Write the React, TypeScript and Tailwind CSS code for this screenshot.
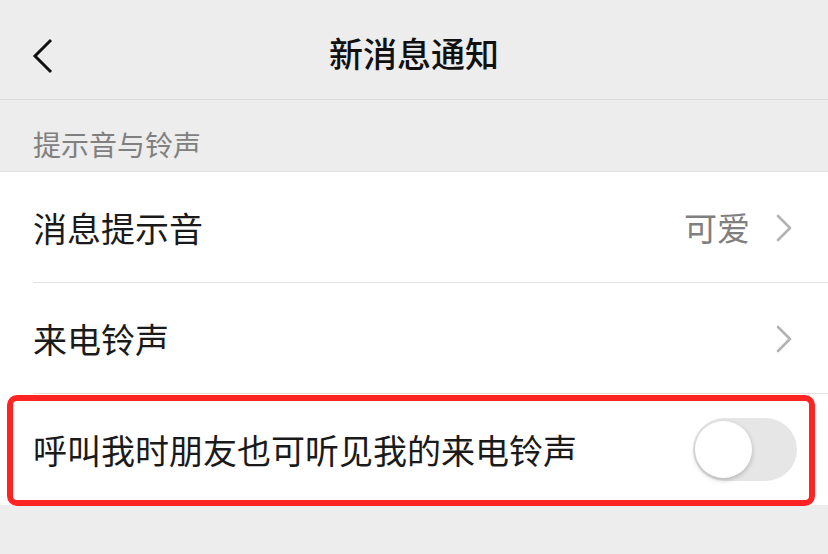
import { ReactNode } from "react";

const font = {
  fontFamily: '"Noto Sans CJK SC", "Noto Sans", sans-serif',
};

function Chevron() {
  return (
    <svg width="16" height="28" viewBox="0 0 16 28" fill="none">
      <path
        d="M2 2 L14 14 L2 26"
        stroke="#b3b3b3"
        strokeWidth="2.6"
        strokeLinecap="round"
        strokeLinejoin="round"
      />
    </svg>
  );
}

function Row({
  label,
  right,
  divider = true,
}: {
  label: string;
  right?: ReactNode;
  divider?: boolean;
}) {
  return (
    <div className="relative flex h-[111px] items-center justify-between pl-[33px] pr-[36px]">
      <span className="text-[34px] leading-none text-[#1a1a1a]">{label}</span>
      {right}
      {divider && (
        <div className="absolute bottom-0 left-[33px] right-0 h-px bg-[#e3e3e3]" />
      )}
    </div>
  );
}

export default function App() {
  return (
    <div
      className="flex h-[554px] w-[828px] flex-col overflow-hidden bg-[#ededed]"
      style={font}
    >
      <header className="relative flex h-[100px] shrink-0 items-center justify-center border-b border-[#d9d9d9] bg-[#ededed] pt-[6px]">
        <svg
          className="absolute left-[32px] top-[38px]"
          width="22"
          height="36"
          viewBox="0 0 22 36"
          fill="none"
        >
          <path
            d="M19 2 L3 18 L19 34"
            stroke="#111"
            strokeWidth="3"
            strokeLinejoin="miter"
          />
        </svg>
        <h1 className="text-[34px] font-medium leading-none text-[#111]">
          新消息通知
        </h1>
      </header>

      <div className="flex h-[71px] shrink-0 items-center pl-[33px] pt-[16px]">
        <span className="text-[28px] leading-none text-[#808080]">
          提示音与铃声
        </span>
      </div>

      <div className="border-t border-[#e0e0e0] bg-white">
        <Row
          label="消息提示音"
          right={
            <div className="flex items-center gap-[26px]">
              <span className="text-[33px] leading-none text-[#7f7f7f]">
                可爱
              </span>
              <Chevron />
            </div>
          }
        />
        <Row label="来电铃声" right={<Chevron />} />
        <div className="relative">
          <Row
            label="呼叫我时朋友也可听见我的来电铃声"
            divider={false}
            right={
              <div className="relative mr-[-5px] h-[63px] w-[104px] rounded-full bg-[#e6e6e6]">
                <div className="absolute left-[2px] top-[3px] h-[57px] w-[57px] rounded-full bg-white shadow-[0_2px_5px_rgba(0,0,0,0.22)]" />
              </div>
            }
          />
          <div className="pointer-events-none absolute bottom-[-1px] left-[7px] right-[13px] top-[1px] rounded-[10px] border-[6px] border-[#ff2424]" />
        </div>
      </div>
    </div>
  );
}
